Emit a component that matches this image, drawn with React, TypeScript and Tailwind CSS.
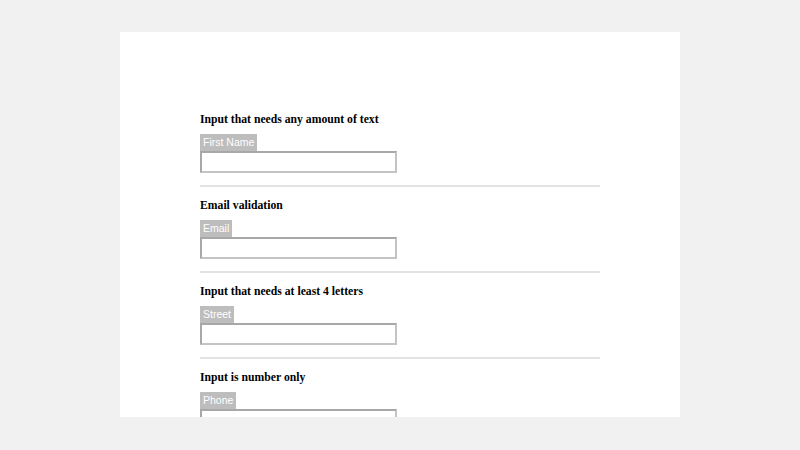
import React from "react";

const sections = [
  { title: "Input that needs any amount of text", label: "First Name" },
  { title: "Email validation", label: "Email" },
  { title: "Input that needs at least 4 letters", label: "Street" },
  { title: "Input is number only", label: "Phone" },
];

export default function App() {
  return (
    <div className="w-[800px] h-[450px] bg-[#f1f1f1] pt-[32px] overflow-hidden">
      <div className="mx-auto w-[560px] h-[385px] bg-white overflow-hidden px-[80px] pt-[81px]">
        {sections.map((s, i) => (
          <div key={i}>
            {i > 0 && <div className="h-[2px] bg-[#e2e2e2] mt-[12px] mb-[12px]" />}
            <h3
              className="text-[11.7px] leading-[14px] font-bold text-black"
              style={{ fontFamily: '"Liberation Serif", "Times New Roman", serif' }}
            >
              {s.title}
            </h3>
            <div className="mt-[7px] flex flex-col items-start">
              <span
                className="h-[17px] px-[3px] bg-[#bdbdbd] text-white text-[10.5px] leading-[17px]"
                style={{ fontFamily: '"Liberation Sans", Arial, sans-serif' }}
              >
                {s.label}
              </span>
              <input
                type="text"
                className="block w-[197px] h-[22px] border-2 border-[#c4c4c4] border-t-[#a8a8a8] border-l-[#a8a8a8] bg-white outline-none"
              />
            </div>
          </div>
        ))}
      </div>
    </div>
  );
}
